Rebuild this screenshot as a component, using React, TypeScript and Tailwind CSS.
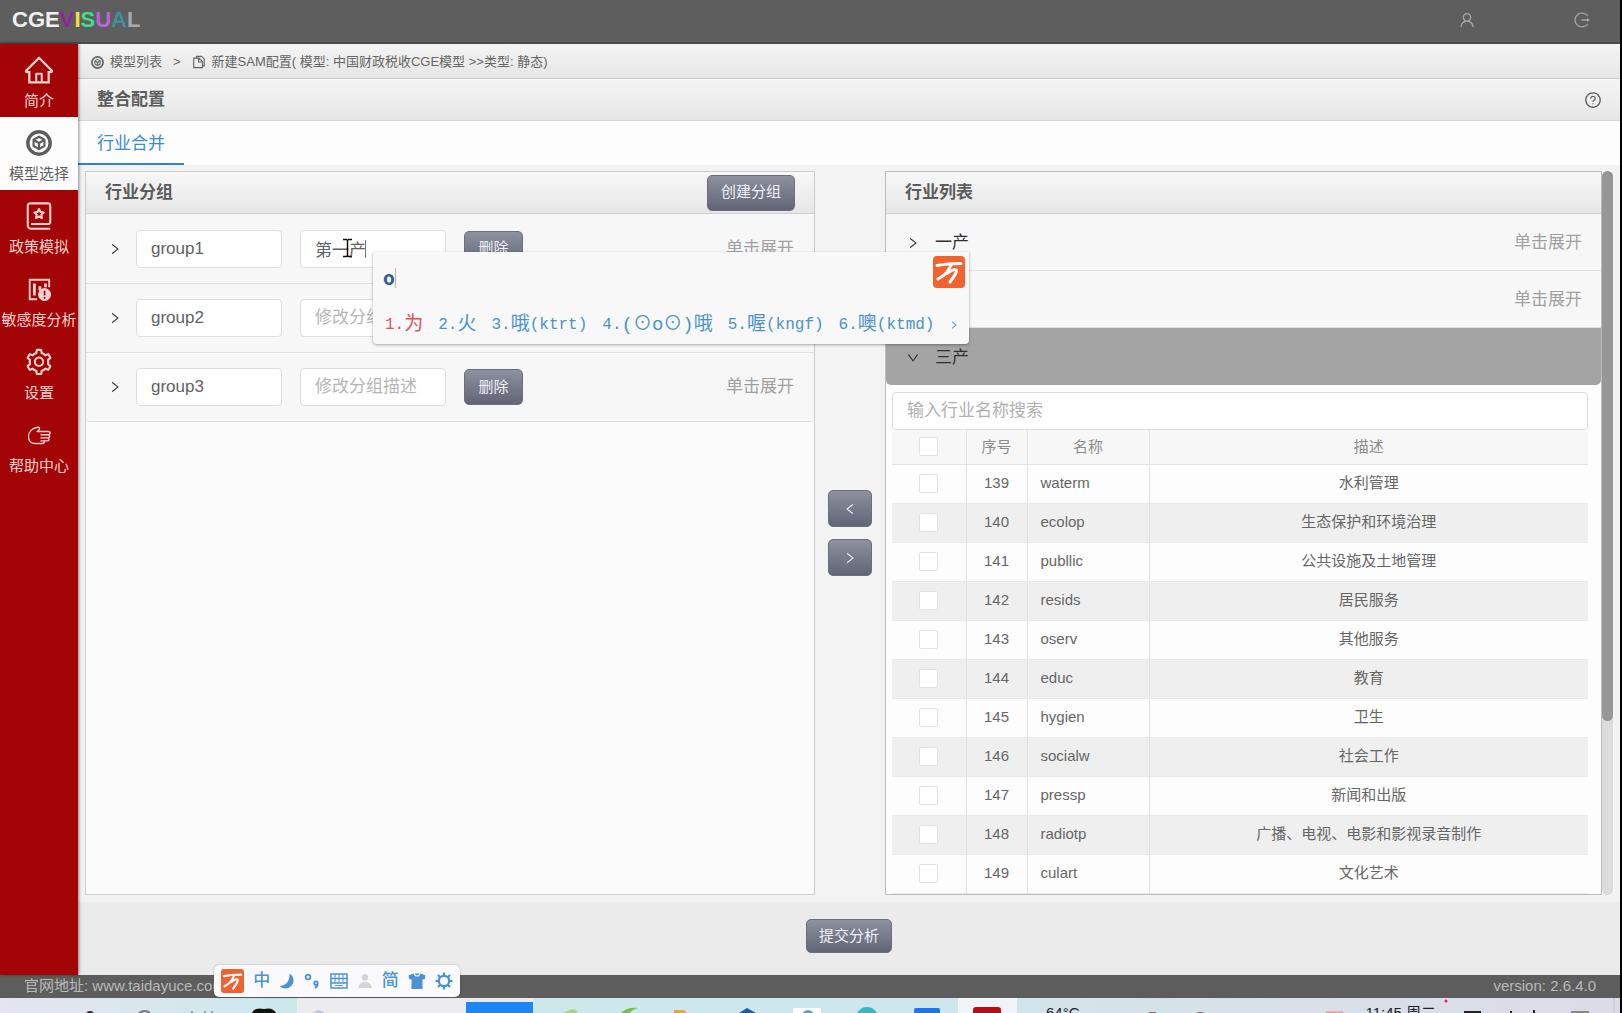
import { useState } from 'react';
import type { ReactNode } from 'react';
import {
  AiOutlineDown,
  AiOutlineHome,
  AiOutlineLeft,
  AiOutlineLogout,
  AiOutlineQuestionCircle,
  AiOutlineRight,
  AiOutlineSetting,
  AiOutlineUser,
} from 'react-icons/ai';
import { IoPerson, IoShirt } from 'react-icons/io5';
import clsx from 'clsx';

interface Group {
  name: string;
  description: string;
}

interface Industry {
  id: number;
  name: string;
  description: string;
}

const logoLetters = [
  { char: 'V', color: 'text-[#96229a]' },
  { char: 'I', color: 'text-[#f2e33c]' },
  { char: 'S', color: 'text-[#3fdc8c]' },
  { char: 'U', color: 'text-[#bd62dc]' },
  { char: 'A', color: 'text-[#3f8f9c]' },
  { char: 'L', color: 'text-[#a9a9ad]' },
];

const navItems: { label: string; icon: ReactNode; active?: boolean }[] = [
  { label: '简介', icon: <AiOutlineHome className="h-8 w-8" /> },
  { label: '模型选择', icon: <CubeIcon className="h-[26px] w-[26px]" />, active: true },
  { label: '政策模拟', icon: <PolicyIcon className="h-[30px] w-[30px]" /> },
  { label: '敏感度分析', icon: <SensitivityIcon className="h-[26px] w-[26px]" /> },
  { label: '设置', icon: <AiOutlineSetting className="h-[30px] w-[30px]" /> },
  { label: '帮助中心', icon: <HandIcon className="h-[22px] w-6" /> },
];

const initialGroups: Group[] = [
  { name: 'group1', description: '第一产' },
  { name: 'group2', description: '' },
  { name: 'group3', description: '' },
];

const industries: Industry[] = [
  { id: 139, name: 'waterm', description: '水利管理' },
  { id: 140, name: 'ecolop', description: '生态保护和环境治理' },
  { id: 141, name: 'publlic', description: '公共设施及土地管理' },
  { id: 142, name: 'resids', description: '居民服务' },
  { id: 143, name: 'oserv', description: '其他服务' },
  { id: 144, name: 'educ', description: '教育' },
  { id: 145, name: 'hygien', description: '卫生' },
  { id: 146, name: 'socialw', description: '社会工作' },
  { id: 147, name: 'pressp', description: '新闻和出版' },
  { id: 148, name: 'radiotp', description: '广播、电视、电影和影视录音制作' },
  { id: 149, name: 'culart', description: '文化艺术' },
];

const candidates = [
  { word: '为', code: '' },
  { word: '火', code: '' },
  { word: '哦', code: '(ktrt)' },
  { word: '(⊙o⊙)哦', code: '' },
  { word: '喔', code: '(kngf)' },
  { word: '噢', code: '(ktmd)' },
];

const buttonClass =
  'flex items-center justify-center rounded-[5px] border border-[#6b6f7c] bg-linear-to-b from-[#8e919f] to-[#616575] text-[15px] text-[#eef0f8]';
const panelHeaderClass =
  'flex h-[42px] shrink-0 items-center justify-between border-b border-[#cfcfcf] bg-linear-to-b from-[#f7f7f7] to-[#e6e6e6] pr-[19px] pl-[19px]';
const inputClass =
  'h-[38px] w-[146px] rounded-[4px] border border-[#dedede] bg-white px-[14px] text-[17px] text-[#606266] outline-none placeholder:text-[#b5b5b5]';

export default function App() {
  return (
    <div className="flex h-screen flex-col overflow-hidden bg-black font-['Liberation_Sans','Noto_Sans_CJK_SC',sans-serif] text-[#606060]">
      <div className="mr-[2px] flex min-h-0 flex-1 flex-col">
        <Header />
        <div className="flex min-h-0 flex-1">
          <Sidebar />
          <main className="flex min-w-0 flex-1 flex-col bg-[#ebebeb]">
            <Breadcrumb />
            <div className="flex h-[42px] shrink-0 items-center justify-between border-b border-[#d6d6d6] bg-linear-to-b from-[#f5f5f5] to-[#e7e7e7] pr-[18px] pl-[19px]">
              <h1 className="text-[17px] font-bold text-[#5c5c5c]">整合配置</h1>
              <button type="button" aria-label="帮助">
                <AiOutlineQuestionCircle className="h-[18px] w-[18px] text-[#5c5c5c]" />
              </button>
            </div>
            <div className="flex h-[44px] shrink-0 bg-[#fdfdfd]">
              <button
                type="button"
                className="border-b-2 border-[#3182d0] px-[19px] pt-[3px] text-[17px] text-[#3b8ad4]"
              >
                行业合并
              </button>
            </div>
            <div className="flex min-h-0 flex-1 bg-[#f3f3f3] pt-[6px] pr-[7px] pb-[7px] pl-[7px]">
              <GroupPanel />
              <div className="flex w-[70px] shrink-0 flex-col items-center justify-center gap-3">
                <button type="button" aria-label="移入分组" className={clsx(buttonClass, 'h-[37px] w-11')}>
                  <AiOutlineLeft className="h-[14px] w-[14px]" />
                </button>
                <button type="button" aria-label="移出分组" className={clsx(buttonClass, 'h-[37px] w-11')}>
                  <AiOutlineRight className="h-[14px] w-[14px]" />
                </button>
              </div>
              <IndustryPanel />
            </div>
            <div className="flex h-[73px] shrink-0 items-start justify-center pt-[17px]">
              <button type="button" className={clsx(buttonClass, 'h-[34px] px-3')}>
                提交分析
              </button>
            </div>
          </main>
        </div>
        <footer className="flex h-[23px] shrink-0 items-center justify-between bg-[#5d5d5e] pr-6 pl-6 text-[15px] text-[#b9b9b9]">
          <span>
            官网地址: <a href="#site">www.taidayuce.com</a>
          </span>
          <span>version: 2.6.4.0</span>
        </footer>
        <Taskbar />
      </div>
      <CandidateWindow />
      <ImeToolbar />
    </div>
  );
}

function Header() {
  return (
    <header className="flex h-[44px] shrink-0 items-center justify-between border-b-2 border-[#4c4c4d] bg-[#5e5e5f] pr-[29px] pb-[3px] pl-3">
      <div className="text-[22px] leading-none font-bold text-[#f0f0f0]">
        CGE
        {logoLetters.map((l) => (
          <span key={l.char} className={l.color}>
            {l.char}
          </span>
        ))}
      </div>
      <div className="flex items-center gap-[97px] text-[#a5a5a5]">
        <button type="button" aria-label="用户">
          <AiOutlineUser className="h-[18px] w-[18px]" />
        </button>
        <button type="button" aria-label="退出">
          <AiOutlineLogout className="h-[18px] w-[18px]" />
        </button>
      </div>
    </header>
  );
}

function Sidebar() {
  return (
    <nav className="z-10 flex w-[78px] shrink-0 flex-col bg-[#a30405] shadow-[1px_0_3px_rgba(0,0,0,0.45)]">
      {navItems.map((item) => (
        <a
          key={item.label}
          href="#nav"
          className={clsx(
            'flex h-[73px] flex-col items-center text-[15px] whitespace-nowrap',
            item.active ? 'bg-[#fdfdfd] text-[#5e5e5e]' : 'text-[#f8d2d0]'
          )}
        >
          <span className="flex h-[47px] items-center pt-1">{item.icon}</span>
          <span className="leading-5">{item.label}</span>
        </a>
      ))}
    </nav>
  );
}

function Breadcrumb() {
  return (
    <div className="flex h-[35px] shrink-0 items-center border-b border-[#c9c9c9] bg-linear-to-b from-[#f4f4f4] to-[#e6e6e6] pt-[2px] pl-[13px] text-[13px] text-[#666]">
      <CubeIcon className="h-[13px] w-[13px]" />
      <a href="#models" className="ml-[6px]">
        模型列表
      </a>
      <span className="mx-[11px]">&gt;</span>
      <PagesIcon className="h-[14px] w-[14px]" />
      <span className="ml-[6px]">新建SAM配置( 模型: 中国财政税收CGE模型 &gt;&gt;类型: 静态)</span>
    </div>
  );
}

function GroupPanel() {
  const [groups, setGroups] = useState(initialGroups);

  const update = (index: number, patch: Partial<Group>) =>
    setGroups(groups.map((g, i) => (i === index ? { ...g, ...patch } : g)));
  const remove = (index: number) => setGroups(groups.filter((_, i) => i !== index));
  const create = () => setGroups([...groups, { name: `group${groups.length + 1}`, description: '' }]);

  return (
    <section className="flex min-w-0 flex-1 flex-col border border-[#cbcbcb] bg-[#fbfbfb]">
      <div className={panelHeaderClass}>
        <h2 className="text-[17px] font-bold text-[#5c5c5c]">行业分组</h2>
        <button type="button" onClick={create} className={clsx(buttonClass, 'h-9 w-[88px]')}>
          创建分组
        </button>
      </div>
      <ul className="overflow-hidden rounded-b-[4px] border-b border-[#dedede]">
        {groups.map((group, i) => (
          <li
            key={i}
            className="flex h-[69px] items-center border-t border-[#e0e0e0] bg-[#f7f7f7] pr-5 pl-[22px] first:border-t-0"
          >
            <AiOutlineRight className="h-[14px] w-[14px] shrink-0 text-[#333]" />
            <input
              aria-label="分组名称"
              value={group.name}
              onChange={(e) => update(i, { name: e.target.value })}
              className={clsx(inputClass, 'ml-[14px]')}
            />
            <input
              aria-label="分组描述"
              placeholder="修改分组描述"
              value={group.description}
              onChange={(e) => update(i, { description: e.target.value })}
              className={clsx(inputClass, 'ml-[18px]')}
            />
            <button type="button" onClick={() => remove(i)} className={clsx(buttonClass, 'ml-[18px] h-9 w-[59px]')}>
              删除
            </button>
            <button type="button" className="ml-auto text-[17px] text-[#a0a0a0]">
              单击展开
            </button>
          </li>
        ))}
      </ul>
    </section>
  );
}

function IndustryPanel() {
  return (
    <section className="flex min-w-0 flex-1">
      <div className="flex min-w-0 flex-1 flex-col overflow-hidden border border-[#bdbdbd] bg-[#fdfdfd]">
        <div className={panelHeaderClass}>
          <h2 className="text-[17px] font-bold text-[#5c5c5c]">行业列表</h2>
        </div>
        <SectorRow label="一产" />
        <SectorRow label="二产" />
        <SectorRow label="三产" open />
        <div className="pt-[7px] pr-[13px] pl-[6px]">
          <input
            aria-label="行业名称搜索"
            placeholder="输入行业名称搜索"
            className="h-[38px] w-full rounded-[4px] border border-[#dedede] bg-white px-[14px] text-[17px] outline-none placeholder:text-[#b0b0b0]"
          />
          <IndustryTable />
        </div>
      </div>
      {/* Scroll track with its thumb at the top */}
      <div className="w-[11px] shrink-0 rounded-full bg-[#dcdcdc]">
        <div className="h-[76%] rounded-full bg-[#979797]" />
      </div>
    </section>
  );
}

function SectorRow({ label, open = false }: { label: string; open?: boolean }) {
  const Arrow = open ? AiOutlineDown : AiOutlineRight;
  return (
    <button
      type="button"
      aria-expanded={open}
      className={clsx(
        'flex h-[57px] shrink-0 items-center justify-between pt-[2px] pr-[19px] pl-5 text-[17px]',
        open ? 'rounded-b-[5px] bg-[#a4a4a4]' : 'border-b border-[#dedede] bg-[#f7f7f7]'
      )}
    >
      <span className="flex items-center gap-[15px] text-[#303030]">
        <Arrow className="h-[14px] w-[14px]" />
        {label}
      </span>
      {!open && <span className="text-[#a0a0a0]">单击展开</span>}
    </button>
  );
}

function IndustryTable() {
  const checkboxClass =
    'block mx-auto h-[19px] w-[19px] appearance-none rounded-[2px] border border-[#e2e2e2] bg-white checked:bg-[#3b8ad4]';
  return (
    <table className="w-full table-fixed text-[15px] text-[#666]">
      <colgroup>
        <col className="w-[74px]" />
        <col className="w-[61px]" />
        <col className="w-[122px]" />
        <col />
      </colgroup>
      <thead>
        <tr className="h-[34px] border-b border-[#e2e2e2] bg-[#f7f7f7] text-[#8c8c8c]">
          <th className="border-r border-[#e2e2e2] p-0">
            <input type="checkbox" aria-label="全选" className={checkboxClass} />
          </th>
          <th className="border-r border-[#e2e2e2] p-0 font-normal">序号</th>
          <th className="border-r border-[#e2e2e2] p-0 font-normal">名称</th>
          <th className="p-0 font-normal">描述</th>
        </tr>
      </thead>
      <tbody>
        {industries.map((row) => (
          <tr key={row.id} className="h-[39px] border-b border-[#e8e8e8] even:bg-[#efefef]">
            <td className="border-r border-[#e2e2e2] p-0">
              <input type="checkbox" aria-label={row.name} className={checkboxClass} />
            </td>
            <td className="border-r border-[#e2e2e2] p-0 text-center">{row.id}</td>
            <td className="border-r border-[#e2e2e2] p-0 pl-[13px]">{row.name}</td>
            <td className="p-0 text-center">{row.description}</td>
          </tr>
        ))}
      </tbody>
    </table>
  );
}

function CandidateWindow() {
  return (
    <>
      <IBeamCursor className="absolute top-[238px] left-[342px] z-30 h-5 w-[11px]" />
      <div className="absolute top-[240px] left-[365px] z-10 h-[18px] w-px bg-[#777]" />
      <div className="absolute top-[252px] left-[373px] z-20 flex h-[92px] w-[596px] flex-col justify-between rounded-b-[4px] bg-[#f8f8f8] pr-1 pb-[7px] pl-[10px] shadow-[0_1px_3px_rgba(0,0,0,0.35)]">
        <div className="flex items-start justify-between pt-[4px]">
          <div className="mt-3 flex h-5 items-center border-r border-[#e0a0a0] font-['Noto_Sans','Open_Sans',sans-serif] text-[19px] font-bold text-[#2b5f91]">
            o
          </div>
          <WanLogo className="h-8 w-8" />
        </div>
        <ol className="flex h-6 items-center gap-[15px] pl-[2px] font-['Liberation_Mono','Noto_Sans_CJK_SC',monospace] text-[16px] whitespace-nowrap text-[#4a93c8]">
          {candidates.map((c, i) => (
            <li key={i} className={clsx('flex items-center', i === 0 && 'text-[#e0505c]')}>
              {i + 1}.<span className="text-[19px]">{c.word}</span>
              {c.code}
            </li>
          ))}
          <li>
            <AiOutlineRight className="h-[10px] w-[10px]" />
          </li>
        </ol>
      </div>
    </>
  );
}

function ImeToolbar() {
  return (
    <div className="absolute top-[965px] left-[214px] z-20 flex h-[32px] w-[246px] items-center justify-between rounded-[5px] bg-[#fafafc] px-[7px] text-[#4a92d4] shadow-[0_0_2px_rgba(0,0,0,0.3)]">
      <WanLogo className="h-6 w-[23px]" />
      <span className="text-[17px] font-medium">中</span>
      <svg viewBox="0 0 16 16" className="h-4 w-4" fill="currentColor">
        <path d="M10.500 .5a8 8 0 1 1-10 12.200C7 13 11 8 10.500 .5z" />
      </svg>
      <svg viewBox="0 0 16 16" className="h-4 w-4" fill="none" stroke="currentColor" strokeWidth="1.800">
        <circle cx="4" cy="4" r="2.400" />
        <path d="M12 8.500a1.800 1.800 0 1 1-.1 0zm1.600 2c.2 2-.8 3.600-2.800 4.400" />
      </svg>
      <svg viewBox="0 0 18 16" className="h-4 w-[18px]" fill="none" stroke="currentColor" strokeWidth="1.500">
        <path d="M1 1h16v14H1zM1 5.500h16M1 10h16" />
        <path d="M5 1.500v8M9 1.500v8M13 1.500v8" strokeWidth="1" />
        <path d="M5 12.600h8" strokeWidth="1" />
      </svg>
      <IoPerson className="h-4 w-4 text-[#d4d4d6]" />
      <span className="text-[17px] font-medium">简</span>
      <IoShirt className="h-[18px] w-[18px]" />
      <SunGear className="h-[18px] w-[18px]" />
    </div>
  );
}

function Taskbar() {
  return (
    <div className="flex h-[15px] shrink-0 justify-between overflow-hidden bg-linear-to-r from-[#e4e6f2] via-[#cfe6ee] to-[#dcdce8] text-[#222]">
      <svg viewBox="0 0 1040 15" className="h-[15px] w-[1040px] shrink-0">
        <defs>
          <linearGradient id="wallpaper">
            <stop offset="0" stopColor="#e4e4f2" />
            <stop offset="0.3" stopColor="#c9e9ec" />
            <stop offset="1" stopColor="#cfe6ef" />
          </linearGradient>
        </defs>
        <rect width="1040" height="15" fill="url(#wallpaper)" />
        <circle cx="90" cy="17" r="4" fill="#222" />
        <path d="M139 15q6-4 11 0" fill="none" stroke="#777" strokeWidth="2" />
        <path d="M192 15v-2M205 15v-2M212 15v-2" stroke="#555" />
        <path d="M252 15q2-6 12-4q9-2 12 4z" fill="#111" />
        <rect x="297" width="236" height="15" fill="#ebebf0" />
        <circle cx="319" cy="18" r="6" fill="#b4cdf4" />
        <rect x="466" y="4" width="67" height="11" fill="#1d86f7" />
        <path d="M563 15l9-4 6 2-2 2z" fill="#a9d27c" />
        <path d="M621 15q6-6 17-5-7 2-8 5z" fill="#74c043" />
        <path d="M674 15v-3h10l3 3z" fill="#eea735" />
        <path d="M739 15l8-5 9 5z" fill="#1c58ad" />
        <path d="M793 10h28v5h-28z" fill="#fff" />
        <circle cx="808" cy="18" r="6" fill="#5b9fd8" />
        <circle cx="867" cy="20" r="11" fill="#36b7c4" />
        <rect x="914" y="10" width="26" height="9" rx="2" fill="#1976ee" />
        <rect x="958" width="59" height="15" fill="#f0f4f6" />
        <rect x="973" y="9" width="28" height="9" rx="3" fill="#b90c16" />
      </svg>
      <div className="flex flex-1 items-start pt-[6px] pl-[6px] text-[15px] leading-[17px]">
        <span>64°C</span>
        <svg viewBox="0 0 290 9" className="h-[9px] flex-1" preserveAspectRatio="none">
          <path d="M70 9h7M119 9h6" stroke="#777" strokeWidth="2" />
          <path d="M249 9h18" stroke="#f1998f" strokeWidth="3" />
        </svg>
        <span>11:45 周二</span>
        <svg viewBox="0 0 184 15" className="-mt-[6px] h-[15px] w-[184px]">
          <circle cx="10" cy="3" r="1.500" fill="#e12b50" />
          <path d="M28 14h17M75 15v-2M98 15v-3" stroke="#222" strokeWidth="2" />
          <path d="M135 14h18" stroke="#888" strokeWidth="2" />
          <path d="M178 0v15" stroke="#c3c3d0" />
        </svg>
      </div>
    </div>
  );
}

interface IconProps {
  className?: string;
}

function CubeIcon({ className }: IconProps) {
  return (
    <svg viewBox="0 0 24 24" className={className} fill="none" stroke="currentColor" strokeLinejoin="round">
      <circle cx="12" cy="12" r="10.300" strokeWidth="3.200" />
      <path d="M12 6.200l5 2.800v5.800l-5 2.900-5-2.900V9z" strokeWidth="2" />
      <path d="M7.500 9.500L12 12l4.500-2.500M12 12v5" strokeWidth="2.200" />
    </svg>
  );
}

function PolicyIcon({ className }: IconProps) {
  return (
    <svg viewBox="0 0 32 32" className={className} fill="none" stroke="currentColor" strokeWidth="2.200" strokeLinejoin="round">
      <path d="M28 29.500H7.500A3.500 3.500 0 0 1 4 26V5a2.500 2.500 0 0 1 2.500-2.500h19A2.500 2.500 0 0 1 28 5v17.500a2 2 0 0 1-2 2H7.500" />
      <path d="M16 8.500l1.600 3.200 3.400.5-2.500 2.500.6 3.500-3.100-1.700-3.100 1.700.6-3.500-2.500-2.500 3.400-.5z" />
    </svg>
  );
}

function SensitivityIcon({ className }: IconProps) {
  return (
    <svg viewBox="0 0 28 28" className={className} fill="none" stroke="currentColor">
      <path d="M12 25H4V4h21v8" strokeWidth="2" />
      <path d="M9 8v13M15 11v5M21 8v4" strokeWidth="3" />
      <circle cx="20" cy="20" r="6.500" fill="currentColor" />
      <path d="M20 16v5M20 22.500v2" stroke="#a30405" strokeWidth="1.800" />
    </svg>
  );
}

// Hand pointing right, fist curled on the left
function HandIcon({ className }: IconProps) {
  return (
    <svg viewBox="0 0 24 22" className={className} fill="none" stroke="currentColor" strokeWidth="1.400" strokeLinecap="round" strokeLinejoin="round">
      <path d="M13 7.500h8.500a1.600 1.600 0 0 1 0 3.200H14M21 10.700a1.600 1.600 0 0 1 0 3.200h-7M20.500 13.900a1.500 1.500 0 0 1 0 3H14M17.500 16.900q0 2.600-2.500 2.600H8C4 19.500 1.500 16.500 1.500 12.500 1.500 8 5 4.500 9.500 3.500q2.500-.8 3 .8.3 1.500-2.500 3.200h3" />
    </svg>
  );
}

function PagesIcon({ className }: IconProps) {
  return (
    <svg viewBox="0 0 16 16" className={className} fill="none" stroke="currentColor" strokeWidth="1.300">
      <path d="M5 3.500V1.500h6l3 3v8h-2" />
      <path d="M2 3.500h6l4 4v7H2zM7.500 3.500v4.500H12" />
    </svg>
  );
}

function WanLogo({ className }: IconProps) {
  return (
    <svg viewBox="0 0 32 32" className={className} preserveAspectRatio="none">
      <rect width="32" height="32" rx="4" fill="#f0622f" />
      <g fill="none" stroke="#fff" strokeWidth="3" strokeLinecap="round">
        <path d="M4 9.500q10-2 24-2" />
        <path d="M18 9q-3 9-13 14" />
        <path d="M14 17.500q7-5 9-3.500t-6 12" />
      </g>
    </svg>
  );
}

function SunGear({ className }: IconProps) {
  return (
    <svg viewBox="0 0 18 18" className={className} fill="none" stroke="currentColor" strokeWidth="2.200">
      <circle cx="9" cy="9" r="5.200" />
      <path d="M9 4V.5M9 17.500V14M4 9H.5M17.500 9H14M5.500 5.500L3 3M15 15l-2.500-2.500M5.500 12.500L3 15M15 3l-2.500 2.500" />
    </svg>
  );
}

function IBeamCursor({ className }: IconProps) {
  return (
    <svg viewBox="0 0 11 20" className={className} fill="none" stroke="#111" strokeWidth="1.500">
      <path d="M1 1.500h3.500l1 1 1-1H10M1 18.500h3.500l1-1 1 1H10M5.500 2v16" />
    </svg>
  );
}
